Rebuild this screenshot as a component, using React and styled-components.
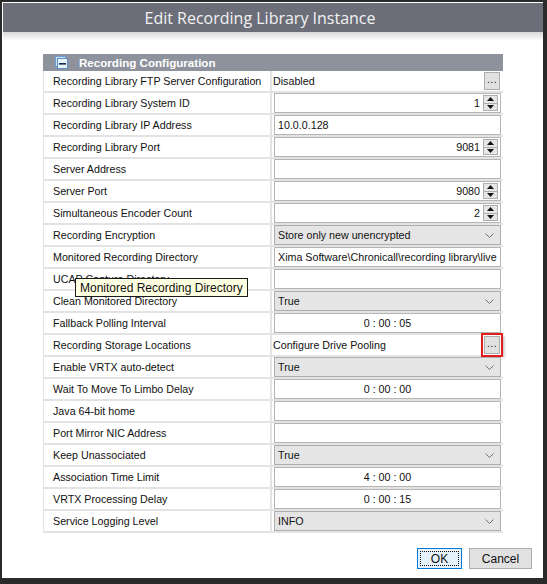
import React from "react";
import styled, { createGlobalStyle, css } from "styled-components";

const GlobalStyle = createGlobalStyle`
  html, body {
    margin: 0;
    padding: 0;
    background: #2a2a2a;
  }
  body {
    font-family: "Liberation Sans", Arial, sans-serif;
  }
`;

const rows = [
  { label: "Recording Library FTP Server Configuration", type: "button", value: "Disabled" },
  { label: "Recording Library System ID", type: "spin", value: "1" },
  { label: "Recording Library IP Address", type: "text", value: "10.0.0.128" },
  { label: "Recording Library Port", type: "spin", value: "9081" },
  { label: "Server Address", type: "text", value: "" },
  { label: "Server Port", type: "spin", value: "9080" },
  { label: "Simultaneous Encoder Count", type: "spin", value: "2" },
  { label: "Recording Encryption", type: "select", value: "Store only new unencrypted" },
  { label: "Monitored Recording Directory", type: "text", value: "Xima Software\\Chronicall\\recording library\\live" },
  { label: "UCAP Capture Directory", type: "text", value: "", tip: "Monitored Recording Directory" },
  { label: "Clean Monitored Directory", type: "select", value: "True" },
  { label: "Fallback Polling Interval", type: "time", value: "0 : 00 : 05" },
  { label: "Recording Storage Locations", type: "button", value: "Configure Drive Pooling", marked: true },
  { label: "Enable VRTX auto-detect", type: "select", value: "True" },
  { label: "Wait To Move To Limbo Delay", type: "time", value: "0 : 00 : 00" },
  { label: "Java 64-bit home", type: "text", value: "" },
  { label: "Port Mirror NIC Address", type: "text", value: "" },
  { label: "Keep Unassociated", type: "select", value: "True" },
  { label: "Association Time Limit", type: "time", value: "4 : 00 : 00" },
  { label: "VRTX Processing Delay", type: "time", value: "0 : 00 : 15" },
  { label: "Service Logging Level", type: "select", value: "INFO" },
];

const Dialog = styled.div`
  margin: 2px 4px 0 2px;
  height: 576px;
  background: #fff;
  padding: 1px 0 0 1px;
  box-sizing: border-box;
  display: flex;
  flex-direction: column;
`;

const TitleBar = styled.div`
  height: 29px;
  background: #6b6e78;
  color: #f2f2f2;
  font-family: "Open Sans", "Noto Sans", sans-serif;
  font-size: 16px;
  display: flex;
  align-items: center;
  justify-content: center;
  padding-right: 26px;
`;

const Fade = styled.div`
  height: 9px;
  background: linear-gradient(#d9d9d9, #fff);
`;

const Body = styled.div`
  flex: 1;
  padding: 13px 0 0 40px;
  display: flex;
  flex-direction: column;
`;

const Grid = styled.div`
  position: relative;
  width: 460px;
`;

const GroupHeader = styled.div`
  height: 17px;
  background: #8d929c;
  color: #fff;
  font-weight: bold;
  font-size: 11.6px;
  display: flex;
  align-items: center;
  gap: 11px;
  padding-left: 12px;
`;

const Row = styled.div`
  display: grid;
  grid-template-columns: 226px 1fr;
  column-gap: 2px;
  background: #e3e3e3;
  padding: 0 0 2px 1px;
  height: 20px;
`;

const Label = styled.div`
  background: #fff;
  font-size: 10.7px;
  color: #111;
  display: flex;
  align-items: center;
  padding-left: 9px;
  white-space: nowrap;
`;

const Value = styled.div`
  background: #fff;
  display: flex;
  align-items: center;
  padding: 0 2px;
  font-size: 10.7px;
  color: #111;
  min-width: 0;
  height: 20px;
`;

const Field = styled.div`
  flex: 1;
  height: 20px;
  box-sizing: border-box;
  border: 1px solid #b5b5b5;
  display: flex;
  align-items: center;
  padding: 0 3px;
  overflow: hidden;
  white-space: nowrap;
  background: ${(p) => (p.$select ? "#e5e5e5" : "#fff")};
  border-color: ${(p) => (p.$select ? "#adadad" : "#b5b5b5")};
  justify-content: ${(p) => (p.$center ? "center" : "flex-start")};
  ${(p) =>
    p.$select &&
    css`
      justify-content: space-between;
      padding-right: 6px;
    `}
`;

const Number = styled.span`
  flex: 1;
  text-align: right;
  padding-right: 3px;
`;

const Spinner = styled.div`
  width: 15px;
  height: 16px;
  display: flex;
  flex-direction: column;
  border: 1px solid #adadad;
  box-sizing: border-box;
  margin-right: -1px;
`;

const SpinHalf = styled.div`
  flex: 1;
  background: #e6e6e6;
  display: flex;
  align-items: center;
  justify-content: center;
  & + & {
    border-top: 1px solid #adadad;
  }
`;

const Plain = styled.span`
  flex: 1;
  margin-left: -1px;
  white-space: nowrap;
`;

/* the red ring on the marked button is drawn as a shadow so the row keeps its height */
const Dots = styled.div`
  width: 16px;
  height: 18px;
  box-sizing: border-box;
  border: 1px solid #adadad;
  background: #e1e1e1;
  display: flex;
  align-items: flex-end;
  justify-content: center;
  padding-bottom: 4px;
  font-size: 10px;
  line-height: 1;
  letter-spacing: 0.5px;
  margin-right: 1px;
  ${(p) =>
    p.$marked &&
    css`
      box-shadow: 0 0 0 1px #fff, 0 0 0 3px #e41b1b, 2px 2px 3px 2px rgba(0, 0, 0, 0.3);
    `}
`;

const Tip = styled.div`
  position: absolute;
  left: 32px;
  top: 224px;
  height: 19px;
  box-sizing: border-box;
  padding: 0 4px;
  background: #ffffe1;
  border: 1px solid #1a1a1a;
  font-size: 12px;
  color: #111;
  display: flex;
  align-items: center;
  white-space: nowrap;
`;

const Footer = styled.div`
  display: flex;
  justify-content: flex-end;
  gap: 7px;
  padding: 15px 11px 0 0;
`;

const Button = styled.button`
  height: 21px;
  min-width: ${(p) => (p.$primary ? "45px" : "63px")};
  box-sizing: border-box;
  font-family: "Liberation Sans", Arial, sans-serif;
  font-size: 12px;
  color: #111;
  padding: 0;
  background: ${(p) => (p.$primary ? "#e5f1fb" : "#e1e1e1")};
  border: 1px solid ${(p) => (p.$primary ? "#0078d7" : "#adadad")};
  display: flex;
  align-items: center;
  justify-content: center;
  ${(p) =>
    p.$primary &&
    css`
      & > span {
        outline: 1px dotted #111;
        width: 37px;
        height: 13px;
        display: flex;
        align-items: center;
        justify-content: center;
      }
    `}
`;

const Chevron = () => (
  <svg width="9" height="5" viewBox="0 0 9 5">
    <path d="M0.5 0.5 L4.5 4.5 L8.5 0.5" fill="none" stroke="#707070" strokeWidth="1" />
  </svg>
);

const Arrow = ({ down }) => (
  <svg width="7" height="4" viewBox="0 0 7 4">
    <path d={down ? "M0 0 H7 L3.5 4 Z" : "M0 4 H7 L3.5 0 Z"} fill="#111" />
  </svg>
);

const CollapseIcon = () => (
  <svg width="13" height="13" viewBox="0 0 13 13">
    <rect x="0.5" y="0.5" width="10" height="10" fill="#cfe3f5" stroke="#6f9fd0" />
    <rect x="2.5" y="2.5" width="10" height="10" fill="#eaf4fd" stroke="#5b8ec4" />
    <rect x="4" y="7" width="7" height="1.6" fill="#0b2a50" />
  </svg>
);

const Editor = ({ row }) => {
  switch (row.type) {
    case "spin":
      return (
        <Field>
          <Number>{row.value}</Number>
          <Spinner>
            <SpinHalf>
              <Arrow />
            </SpinHalf>
            <SpinHalf>
              <Arrow down />
            </SpinHalf>
          </Spinner>
        </Field>
      );
    case "select":
      return (
        <Field $select>
          <span>{row.value}</span>
          <Chevron />
        </Field>
      );
    case "time":
      return <Field $center>{row.value}</Field>;
    case "button":
      return (
        <>
          <Plain>{row.value}</Plain>
          <Dots $marked={row.marked}>...</Dots>
        </>
      );
    default:
      return <Field>{row.value}</Field>;
  }
};

export default function App() {
  const tipRow = rows.find((r) => r.tip);
  return (
    <>
      <GlobalStyle />
      <Dialog>
        <TitleBar>Edit Recording Library Instance</TitleBar>
        <Fade />
        <Body>
          <Grid>
            <GroupHeader>
              <CollapseIcon />
              Recording Configuration
            </GroupHeader>
            {rows.map((row) => (
              <Row key={row.label}>
                <Label>{row.label}</Label>
                <Value>
                  <Editor row={row} />
                </Value>
              </Row>
            ))}
            {tipRow && <Tip>{tipRow.tip}</Tip>}
          </Grid>
          <Footer>
            <Button $primary>
              <span>OK</span>
            </Button>
            <Button>Cancel</Button>
          </Footer>
        </Body>
      </Dialog>
    </>
  );
}
